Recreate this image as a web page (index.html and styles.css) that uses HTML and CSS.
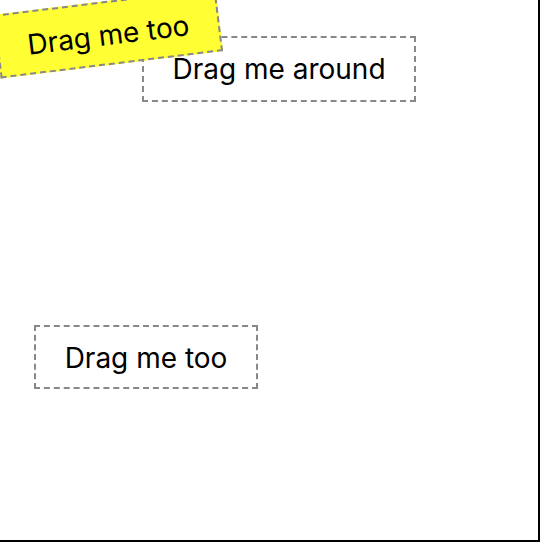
FILE: index.html
```html
<!DOCTYPE html>
<html>
<head>
<meta charset="utf-8">
<link rel="stylesheet" href="styles.css">
</head>
<body>
<div class="canvas">
  <div class="drag drag-around">Drag me around</div>
  <div class="drag drag-low">Drag me too</div>
  <div class="drag drag-tilt">Drag me too</div>
</div>
</body>
</html>
```
FILE: styles.css
```css
html, body {
  margin: 0;
  padding: 0;
  background: #fff;
}
.canvas {
  position: relative;
  width: 538px;
  height: 540px;
  border-right: 2px solid #000;
  border-bottom: 2px solid #000;
  overflow: hidden;
  font-family: Inter, "Noto Sans", sans-serif;
}
.drag {
  position: absolute;
  box-sizing: border-box;
  border: 2px dashed #888;
  font-size: 28px;
  line-height: 34px;
  color: #000;
  text-align: center;
  padding: 14px 0;
  white-space: nowrap;
}
.drag-around {
  left: 142px;
  top: 36px;
  width: 274px;
  height: 66px;
}
.drag-low {
  left: 34px;
  top: 325px;
  width: 224px;
  height: 64px;
  padding-top: 14px;
}
.drag-tilt {
  left: -4px;
  top: 1px;
  width: 224px;
  height: 64px;
  padding-top: 15px;
  background: #ffff33;
  transform: rotate(-7deg);
  z-index: 2;
}
```
